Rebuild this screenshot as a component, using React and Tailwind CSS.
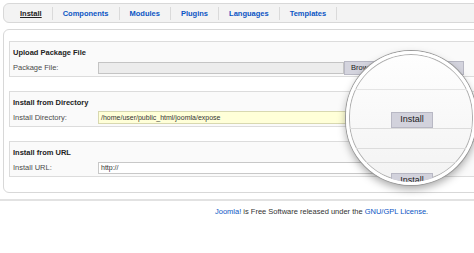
import React from "react";

const tabs = ["Install", "Components", "Modules", "Plugins", "Languages", "Templates"];

function Fieldset({ title, label, children }) {
  return (
    <div className="h-[36px] border border-[#dcdcdc] bg-[#fafafa] pl-[3px] flex flex-col">
      <div className="pt-[6px] h-[19px] text-[7.5px] leading-[9px] font-bold text-[#222]">{title}</div>
      <div className="flex items-center h-[13px]">
        <div className="w-[85px] text-[7.5px] leading-[9px] text-[#4a4a4a]">{label}</div>
        {children}
      </div>
    </div>
  );
}

function Btn({ children, className = "" }) {
  return (
    <div className={"h-[14px] border border-[#b8b8c4] bg-[#d4d4de] text-[7.5px] text-[#222] flex items-center justify-center " + className}>
      {children}
    </div>
  );
}

export default function App() {
  return (
    <div className="relative w-[474px] h-[253px] overflow-hidden bg-white font-['Liberation_Sans',Arial,sans-serif]">
      <div className="w-[560px] pl-[3px] pt-[3px]">
        {/* tab bar */}
        <div className="h-[20px] border border-[#d8d8d8] rounded-l-[6px] bg-[#f3f3f3] flex items-center pl-[6px]">
          {tabs.map((t, i) => (
            <div key={t} className="flex items-center">
              <div
                className={
                  "px-[10px] text-[7.5px] font-bold leading-[9px] " +
                  (i === 0 ? "text-[#222] underline" : "text-[#0b55c4]")
                }
              >
                {t}
              </div>
              <div className="w-px h-[13px] bg-[#dadada]" />
            </div>
          ))}
        </div>

        {/* main panel */}
        <div className="mt-[6px] h-[164px] border border-[#d8d8d8] rounded-l-[6px] bg-white pl-[5px] pt-[11px] flex flex-col gap-[14px]">
          <Fieldset title="Upload Package File" label="Package File:">
            <div className="w-[246px] h-[12px] border border-[#c4c4c4] bg-[#ececec]" />
            <Btn className="w-[120px] justify-start pl-[6px]">Browse...</Btn>
          </Fieldset>
          <Fieldset title="Install from Directory" label="Install Directory:">
            <div className="w-[291px] h-[13px] border border-[#d8d8b0] bg-[#ffffd8] text-[7px] leading-[11px] pl-[2px] text-[#333]">
              /home/user/public_html/joomla/expose
            </div>
            <div className="ml-[3px] w-[42px] h-[14px]" />
          </Fieldset>
          <Fieldset title="Install from URL" label="Install URL:">
            <div className="w-[291px] h-[12px] border border-[#c8c8c8] bg-white text-[7px] leading-[10px] pl-[2px] text-[#333]">
              http://
            </div>
            <div className="ml-[3px] w-[42px] h-[14px]" />
          </Fieldset>
        </div>

        {/* footer */}
        <div className="mt-[6px] -ml-[3px] h-[2px] bg-[#e2e2e2]" />
        <div className="pl-[212px] pt-[6px] text-[7.5px] leading-[9px] text-[#333]">
          <span className="text-[#0b55c4]">Joomla!</span> is Free Software released under the{" "}
          <span className="text-[#0b55c4]">GNU/GPL License</span>.
        </div>
      </div>

      {/* magnifier lens */}
      <div className="absolute left-[346px] top-[51px] w-[130px] h-[134px] rounded-full overflow-hidden bg-gradient-to-b from-[#fefefe] to-[#f3f3f3] border-[3px] border-white shadow-[0_0_0_1px_#9a9a9a,inset_0_0_0_1px_#b0b0b0,0_4px_8px_rgba(0,0,0,0.35)]">
        <div className="absolute left-0 right-0 top-[35px] h-px bg-[#e4e4e4]" />
        <div className="absolute left-0 right-0 top-[74px] h-px bg-[#dcdcdc]" />
        <div className="absolute left-0 right-0 top-[94px] h-px bg-[#dcdcdc]" />
        <div className="absolute left-0 right-0 top-[108px] h-px bg-[#dcdcdc]" />
        <div className="absolute left-[42px] top-[58px] w-[42px] h-[16px] border border-[#b8b8c4] bg-[#d2d2dc] text-[9px] text-[#222] flex items-center justify-center">
          Install
        </div>
        <div className="absolute left-[42px] top-[119px] w-[42px] h-[16px] border border-[#b8b8c4] bg-[#d2d2dc] text-[9px] leading-[12px] text-[#222] flex justify-center">
          Install
        </div>
      </div>
    </div>
  );
}
